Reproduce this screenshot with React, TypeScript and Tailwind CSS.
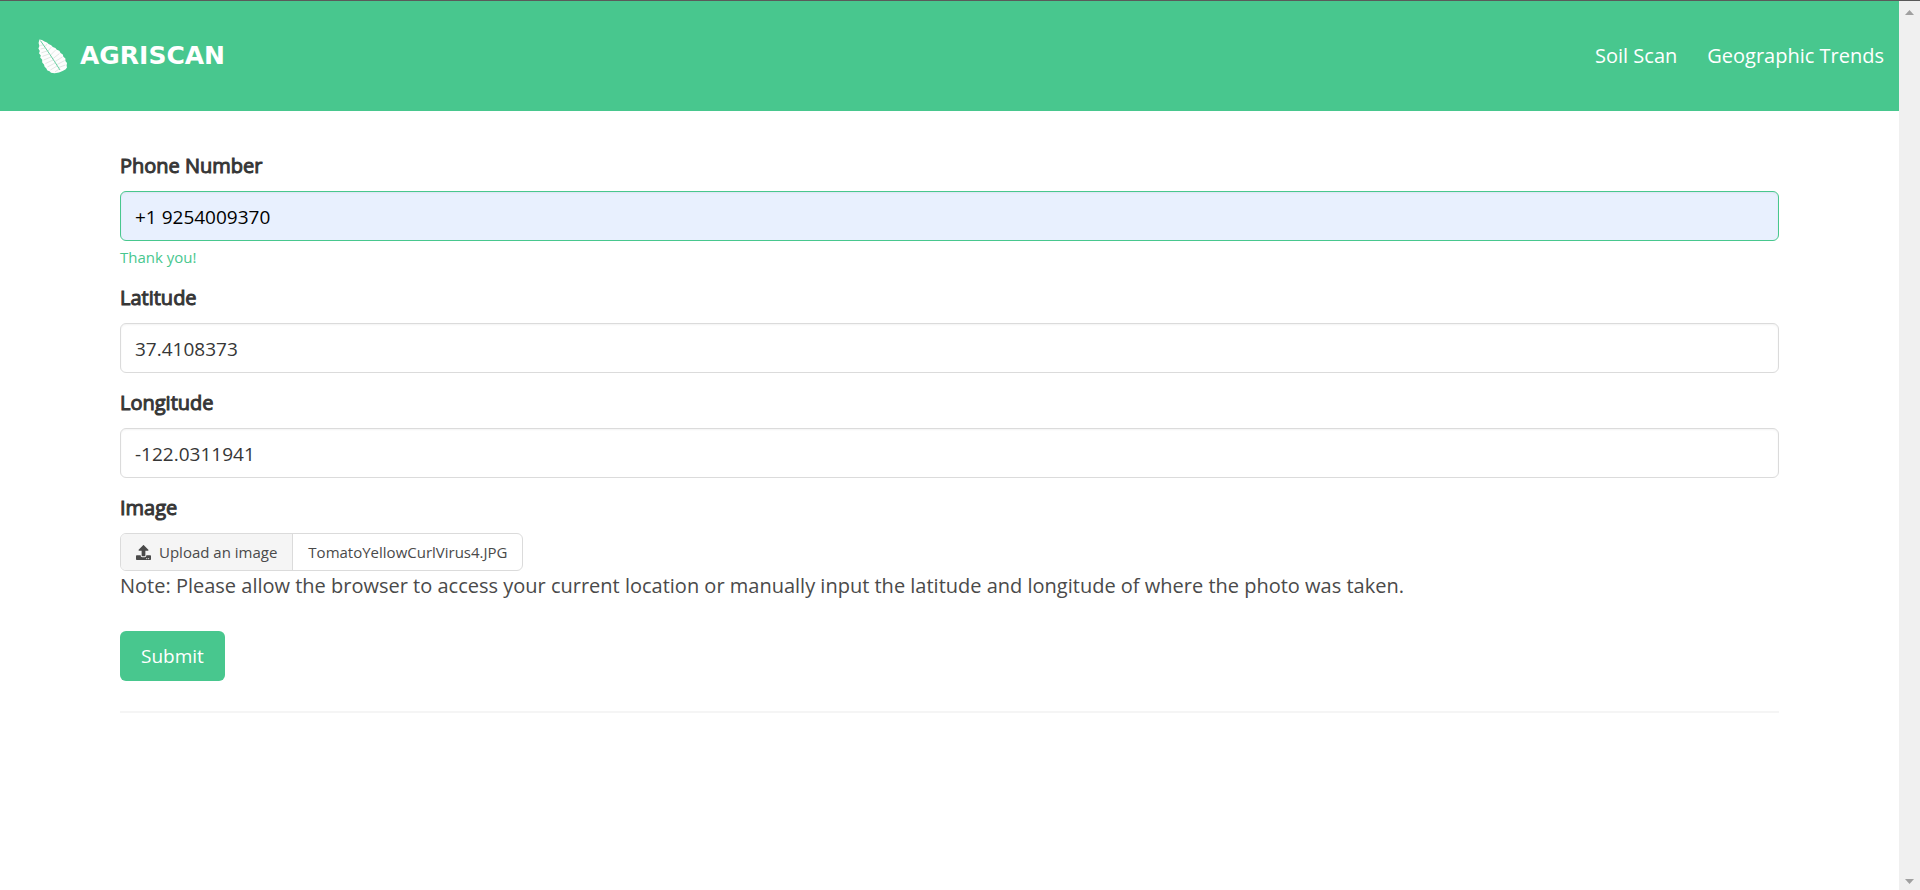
import { useState } from "react";
import { FaUpload } from "react-icons/fa";

const NAV_LINKS = [
  { label: "Soil Scan", href: "#soil-scan" },
  { label: "Geographic Trends", href: "#trends" },
];

const LABEL_TEXT = "mb-2.5 block text-xl leading-[30px] text-[#363636] [-webkit-text-stroke:1px_#363636]";

const INPUT_BASE =
  "block h-[50px] w-full rounded-md border px-3.5 pt-0.5 text-[19px] shadow-[inset_0_1px_2px_rgba(10,10,10,0.05)] focus:outline-none";

type FieldProps = {
  id: string;
  label: string;
  value: string;
  onChange: (value: string) => void;
  type?: string;
  help?: string;
};

function LeafLogo() {
  return (
    <svg width="30" height="36" viewBox="0 -1 30 36" aria-hidden="true">
      <path
        d="M1.4 .4 L4 1 L6.5 2.6 L9 3.6 L10.6 5 L13.2 6.2 L14.8 8 L17.4 9 L18.8 10.8 L21.4 11.8 L22.5 14 L24.8 15.4 L25.4 17.8 L27.4 19.6 L27.4 22 L29 24 L28.6 26.4 L29 28.4 L27.4 30.4 L24.6 32 L21 33.4 L16.6 34.2 L13 33.8 L11.6 32.2 L9.4 31.4 L8.2 29.2 L6.6 27.8 L6 25.4 L4.2 23.4 L4.2 20.8 L2.2 18.6 L2.8 16.4 L1 14.2 L1.8 12 L.4 9.6 L1.4 7 L.6 4 Z"
        fill="#fdfdfd"
      />
      <path
        d="M5 6 L2.2 6.4 M7 9 L2.6 10 M9 12 L3.4 13.8 M11 15 L4.4 17.4 M13 18 L5.6 21 M15 21 L7.4 24.6 M17 24 L9.4 28 M19 27 L12.4 31 M21 30 L17 33 M7 7.6 L9 5 M10 12 L13.4 8 M12.6 16 L17.6 11 M15 19.6 L21.4 14.6 M17 22.6 L24.4 18 M19 25.6 L26.6 21.6 M21 28.4 L27.4 26"
        stroke="#cfd6d2"
        strokeWidth="0.6"
        fill="none"
      />
      <path d="M2.4 1.6 Q7.6 9 12 15.6 T22 31" stroke="#66cfa0" strokeWidth="1" fill="none" />
    </svg>
  );
}

function Field({ id, label, value, onChange, type = "text", help }: FieldProps) {
  const tone = help
    ? "border-[#48c78e] bg-[#e8f0fe] text-black"
    : "border-[#dbdbdb] bg-white text-[#363636]";

  return (
    <div>
      <label htmlFor={id} className={LABEL_TEXT}>
        {label}
      </label>
      <input
        id={id}
        type={type}
        value={value}
        onChange={(e) => onChange(e.target.value)}
        className={`${INPUT_BASE} ${tone}`}
      />
      {help && <p className="mt-[5px] text-[15px] leading-[22px] text-[#48c78e]">{help}</p>}
    </div>
  );
}

function Header() {
  return (
    <header className="flex h-[110px] items-center justify-between bg-[#48c78e] pr-[15px] pl-[38px] text-white">
      <a href="#home" className="flex items-center gap-3">
        <LeafLogo />
        <span className="font-['DejaVu_Sans',sans-serif] text-[25px] leading-8 font-bold">AGRISCAN</span>
      </a>
      <nav className="flex gap-[30px] text-xl">
        {NAV_LINKS.map((link) => (
          <a key={link.href} href={link.href}>
            {link.label}
          </a>
        ))}
      </nav>
    </header>
  );
}

function ScrollTrack() {
  return (
    <div aria-hidden="true" className="flex w-[21px] shrink-0 flex-col items-center justify-between bg-[#f0f0f0] pt-[9px] pb-1.5">
      <svg width="9" height="5" viewBox="0 0 9 5" fill="#a0a0a0">
        <path d="M0 5 L4.5 0 L9 5 Z" />
      </svg>
      <svg width="9" height="5" viewBox="0 0 9 5" fill="#a0a0a0">
        <path d="M0 0 L4.5 5 L9 0 Z" />
      </svg>
    </div>
  );
}

export default function App() {
  const [phone, setPhone] = useState("+1 9254009370");
  const [latitude, setLatitude] = useState("37.4108373");
  const [longitude, setLongitude] = useState("-122.0311941");
  const [fileName, setFileName] = useState("TomatoYellowCurlVirus4.JPG");

  return (
    <div className="flex min-h-screen border-t border-[#5a5a5a] bg-white font-['Open_Sans',sans-serif] text-[#4a4a4a]">
      <div className="min-w-0 flex-1">
        <Header />
        <main className="px-[120px] py-10">
          <form onSubmit={(e) => e.preventDefault()}>
            <div className="space-y-[15px]">
              <Field id="phone" label="Phone Number" type="tel" value={phone} onChange={setPhone} help="Thank you!" />
              <Field id="latitude" label="Latitude" value={latitude} onChange={setLatitude} />
              <Field id="longitude" label="Longitude" value={longitude} onChange={setLongitude} />

              <div>
                <span className={LABEL_TEXT}>Image</span>
                <label
                  htmlFor="image"
                  className="flex h-[38px] w-fit cursor-pointer items-stretch overflow-hidden rounded-md border border-[#dbdbdb] text-[15px]"
                >
                  <input
                    id="image"
                    type="file"
                    className="sr-only"
                    onChange={(e) => setFileName(e.target.files?.[0]?.name ?? fileName)}
                  />
                  <span className="flex items-center gap-2 border-r border-[#dbdbdb] bg-[#f5f5f5] px-[15px]">
                    <FaUpload size={15} />
                    Upload an image
                  </span>
                  <span className="flex items-center pr-3.5 pl-[15px]">{fileName}</span>
                </label>
              </div>
            </div>

            <p className="text-xl leading-[30px]">
              Note: Please allow the browser to access your current location or manually input the latitude and
              longitude of where the photo was taken.
            </p>
            <button type="submit" className="mt-[30px] block h-[50px] rounded-md bg-[#48c78e] px-[21px] text-[19px] text-white">
              Submit
            </button>
          </form>
          <hr className="mt-[30px] h-0.5 border-0 bg-[#f5f5f5]" />
        </main>
      </div>
      <ScrollTrack />
    </div>
  );
}
